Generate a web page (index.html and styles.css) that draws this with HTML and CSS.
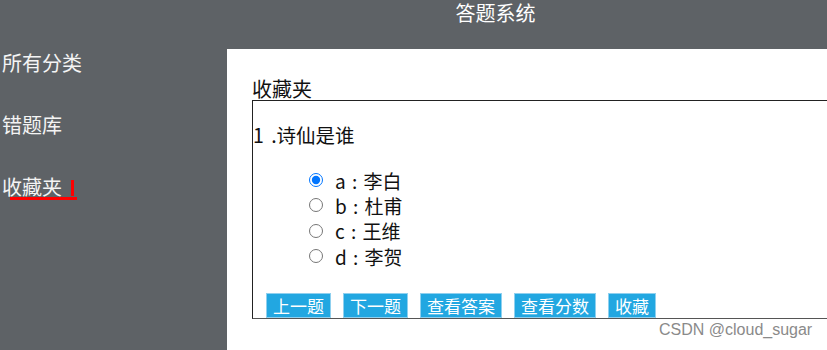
FILE: index.html
```html
<!DOCTYPE html>
<html lang="zh-CN">
<head>
<meta charset="utf-8">
<title>答题系统</title>
<link rel="stylesheet" href="styles.css">
</head>
<body>
<header class="topbar"><h1 class="title">答题系统</h1></header>
<div class="layout">
  <nav class="sidebar">
    <a class="nav-item">所有分类</a>
    <a class="nav-item">错题库</a>
    <a class="nav-item active">收藏夹</a>
  </nav>
  <main class="content">
    <h2 class="section-title">收藏夹</h2>
    <section class="card">
      <p class="question">1 .诗仙是谁</p>
      <ul class="options">
        <li class="option"><input class="radio" type="radio" name="q1" checked><span>a : 李白</span></li>
        <li class="option"><input class="radio" type="radio" name="q1"><span>b : 杜甫</span></li>
        <li class="option"><input class="radio" type="radio" name="q1"><span>c : 王维</span></li>
        <li class="option"><input class="radio" type="radio" name="q1"><span>d : 李贺</span></li>
      </ul>
      <div class="actions">
        <button class="btn">上一题</button>
        <button class="btn">下一题</button>
        <button class="btn">查看答案</button>
        <button class="btn">查看分数</button>
        <button class="btn">收藏</button>
      </div>
    </section>
  </main>
</div>
<div class="watermark">CSDN @cloud_sugar</div>
</body>
</html>
```

FILE: styles.css
```css
html, body {
  margin: 0;
  padding: 0;
  height: 350px;
  overflow: hidden;
}
body {
  font-family: "Noto Sans CJK SC", "Noto Sans", sans-serif;
  background: #5e6266;
  position: relative;
}
.topbar {
  height: 49px;
  background: #5e6266;
}
.title {
  margin: 0;
  padding: 1px 0 0 164px;
  text-align: center;
  font-size: 20px;
  font-weight: normal;
  line-height: 24px;
  color: #ffffff;
}
.layout {
  display: flex;
  height: 301px;
}
.sidebar {
  width: 227px;
  flex: none;
  display: flex;
  flex-direction: column;
  gap: 36px;
  padding: 1px 0 0 2px;
  box-sizing: border-box;
  background: #5e6266;
}
.nav-item {
  font-size: 20px;
  line-height: 26px;
  color: #f4f4f4;
  position: relative;
  align-self: flex-start;
}
.nav-item.active::after {
  content: "";
  position: absolute;
  left: 8px;
  width: 67px;
  top: 23px;
  height: 3px;
  background: #ff0000;
}
.nav-item.active::before {
  content: "";
  position: absolute;
  left: 69px;
  top: 6px;
  width: 3px;
  height: 16px;
  background: #ff0000;
}
.content {
  flex: 1;
  background: #ffffff;
  padding-left: 25px;
  overflow: hidden;
}
.section-title {
  margin: 29px 0 0;
  font-size: 20px;
  font-weight: normal;
  line-height: 22px;
  color: #111;
}
.card {
  width: 640px;
  border: 1px solid #222;
  border-bottom-color: #555;
}
.question {
  margin: 21px 0 0;
  font-size: 19.5px;
  line-height: 26px;
  color: #111;
  word-spacing: 3px;
}
.options {
  list-style: none;
  margin: 19.5px 0 0;
  padding: 0 0 0 56px;
}
.option {
  display: flex;
  align-items: center;
  gap: 12px;
  height: 25.3px;
  font-size: 19px;
  color: #111;
  word-spacing: 2px;
}
.radio {
  margin: 0;
  width: 14px;
  height: 14px;
}
.actions {
  display: flex;
  gap: 12px;
  margin-top: 24px;
  padding-left: 13px;
}
.btn {
  font-family: "Noto Sans CJK SC", sans-serif;
  font-size: 17px;
  line-height: 23px;
  height: 25px;
  padding: 0 6px;
  border: 1px solid #8fd0ef;
  background: #22a7e1;
  color: #ffffff;
  border-radius: 0;
}
.watermark {
  position: absolute;
  left: 659px;
  top: 321px;
  font-family: "Liberation Sans", sans-serif;
  font-size: 16px;
  color: #8a8a8a;
}
```
